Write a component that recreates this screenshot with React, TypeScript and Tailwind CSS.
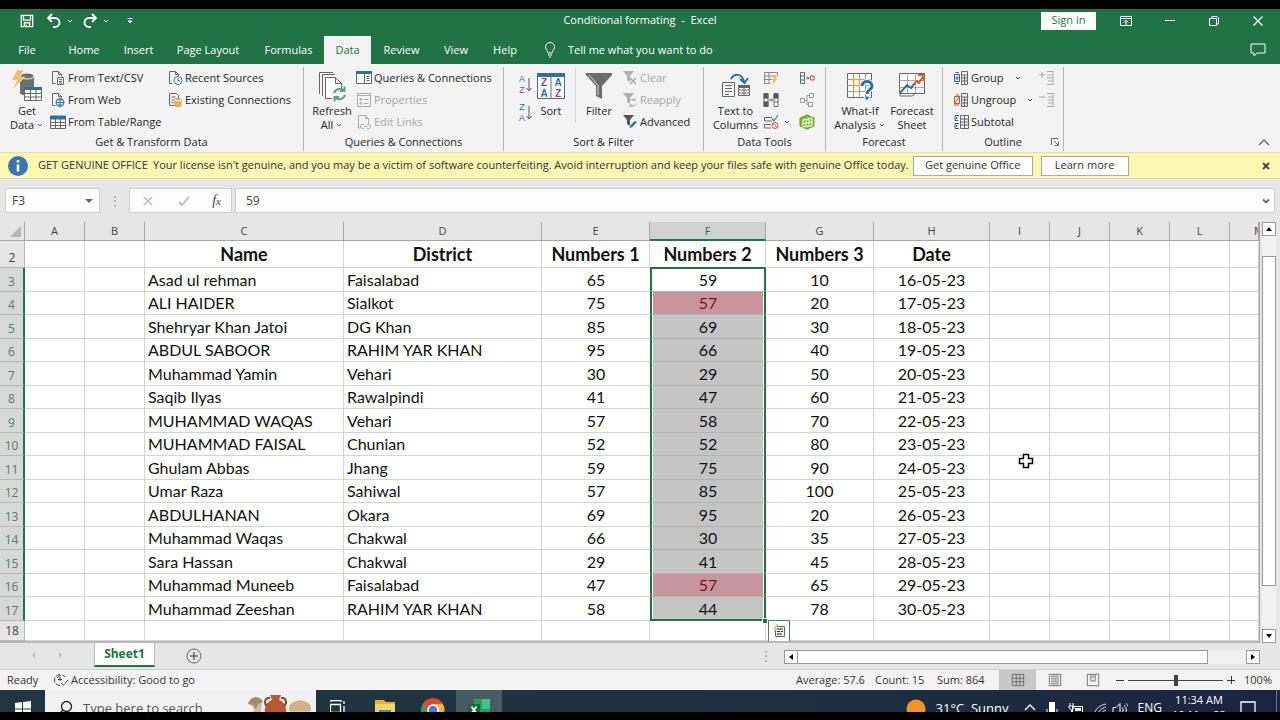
import type { ReactNode } from 'react';
import { clsx } from 'clsx';

type IconProps = { className?: string; box?: string; children: ReactNode };

function Icon({ className = 'size-4', box = '0 0 16 16', children }: IconProps) {
  return (
    <svg viewBox={box} className={clsx('shrink-0', className)} fill="none" stroke="#666" strokeWidth="1" aria-hidden="true">
      {children}
    </svg>
  );
}

const Chevron = ({ className = 'stroke-[#555]' }: { className?: string }) => (
  <svg viewBox="0 0 8 8" className={clsx('size-2 shrink-0', className)} fill="none" aria-hidden="true">
    <path d="M2 3l2 2 2-2" />
  </svg>
);

/* small ribbon icons */

const page = <path d="M2.500 1.500h6l3 3v2M8.500 1.500v3h3M2.500 1.500v12h3" fill="none" />;

const icons = {
  textCsv: (
    <Icon>
      {page}
      <path d="M7.500 7.500h6v7h-6zM9 9.500h3M9 11.500h3M9 13h3" fill="#fff" />
    </Icon>
  ),
  web: (
    <Icon>
      {page}
      <g stroke="#2f6ea5">
        <circle cx="10" cy="10.500" r="4" fill="#fff" />
        <path d="M6 10.500h8M10 6.500v8M7.500 8h5M7.500 13h5" />
      </g>
    </Icon>
  ),
  table: (
    <Icon>
      <path d="M.5 2.500h15v12H.5z" fill="#fff" />
      <path d="M.5 2h15v3H.5z" fill="#2f6ea5" stroke="#2f6ea5" />
      <path d="M.5 8.500h15M.5 11.500h15M5.500 5v9.500M10.500 5v9.500" />
    </Icon>
  ),
  recent: (
    <Icon>
      {page}
      <circle cx="11" cy="10.500" r="4" stroke="#2f6ea5" fill="#fff" />
      <path d="M11 8v3h2" stroke="#2f6ea5" />
    </Icon>
  ),
  existing: (
    <Icon>
      <path d="M2.500 1.500h7l2 2v3M2.500 1.500v12h5M4.500 5h4M4.500 8h3M4.500 10.500h2" />
      <path d="M8 7.500c0-1.300 6-1.300 6 0v6c0 1.300-6 1.300-6 0z" fill="#e6b65c" stroke="#d19c3a" />
      <path d="M8 8c1 1 5 1 6 0" stroke="#fff" />
    </Icon>
  ),
  queries: (
    <Icon>
      <path d="M.5 1.500h15v12H.5z" fill="#fff" />
      <path d="M.5 1.500h15v2H.5z" fill="#2f6ea5" stroke="#2f6ea5" />
      <path d="M8.500 4v9.500M10.500 6.500h3M10.500 8.500h3M10.500 10.500h3" />
    </Icon>
  ),
  properties: (
    <Icon>
      <g stroke="#aaa">
        <path d="M1.500 1.500h13v13h-13zM1.500 3.500h13M7.500 7.500h5M7.500 11.500h5" />
        <path d="M4 6.500h1.500V8H4zM4 10.500h1.500V12H4z" />
      </g>
    </Icon>
  ),
  links: (
    <Icon>
      <g stroke="#aaa">
        <path d="M2.500 14V1.500h7l3 3V10M9.500 1.500v3h3M2.500 14h2" />
        <path d="M8 10.500H6.500a2 2 0 000 4H8M11 10.500h1.500a2 2 0 010 4H11M7.500 12.500h4" />
      </g>
    </Icon>
  ),
  clear: (
    <Icon>
      <path d="M1 1h11L8 6v6L5 10V6z" fill="#b0b0b0" stroke="none" />
      <path d="M8 8l6 6M14 8l-6 6" stroke="#aaa" strokeWidth="1.500" />
    </Icon>
  ),
  reapply: (
    <Icon>
      <path d="M1 1h11L8 6v6L5 10V6z" fill="#b0b0b0" stroke="none" />
      <path d="M7 10a3.500 3.500 0 016-1.500V6M14 11.500a3.500 3.500 0 01-6 1.500v2.500M13 8.500h-2.500M8 13h2.500" stroke="#aaa" />
    </Icon>
  ),
  advanced: (
    <Icon>
      <path d="M1 1h11L8 6v6L5 10V6z" fill="#555" stroke="none" />
      <path d="M7 14.500l1-3 5-5 2 2-5 5z" fill="#2f6ea5" stroke="#fff" strokeWidth=".5" />
    </Icon>
  ),
  flashFill: (
    <Icon>
      <path d="M1.500 2.500h13M1.500 2.500v11h6M1.500 6h11M1.500 9.500h8M6 2.500v11M14.500 2.500v3" stroke="#888" />
      <path d="M11.500 5.500h3l-2 3.500h2L9 15l1.500-4.500H9z" fill="#e8c168" stroke="none" />
    </Icon>
  ),
  duplicates: (
    <Icon>
      <path d="M1 1.500h4v13H1zM11 1.500h4v13h-4zM1 6h4M1 10h4M11 6h4M11 10h4" fill="#fff" />
      <path d="M1 1.500h4V6H1zM1 10h4v4.500H1zM11 2h4v4h-4z" fill="#555" />
      <path d="M6 8h3.500M8 6.500L9.500 8 8 9.500" stroke="#2f6ea5" />
    </Icon>
  ),
  validation: (
    <Icon>
      <path d="M9 3.500H1.500V7H9M8 10.500H1.500V14H8" />
      <path d="M9 4.500l2 2.500 4-6" stroke="#3f9a6b" strokeWidth="1.300" />
      <circle cx="12" cy="11.500" r="3" stroke="#d2453a" />
      <path d="M10 9.500l4 4" stroke="#d2453a" />
    </Icon>
  ),
  consolidate: (
    <Icon>
      <path d="M1.500 2.500h4v11h-4zM1.500 6h4M1.500 10h4" />
      <path d="M7 8h2.500M8.500 6.500L10 8l-1.500 1.500" stroke="#2f6ea5" />
      <path d="M11.500 6h3.500v4h-3.500z" stroke="#c9502e" />
    </Icon>
  ),
  relationships: (
    <Icon>
      <path d="M1.500 6.500h4v4h-4zM10.500 1.500h4v4h-4zM9.500 10.500h4v4h-4zM5.500 8.500h2.500v-5h2.500M8 8.500v4h1.500" stroke="#999" />
    </Icon>
  ),
  model: (
    <Icon>
      <path d="M1 4l7-3 7 3v8l-7 3-7-3z" fill="#7abf2e" stroke="#5e9f1c" />
      <path d="M4 6l9-2v8l-9 1zM4 9.500l9-1.500M7 5.500V13M10 4.800v7.500" stroke="#fff" />
    </Icon>
  ),
  group: (
    <Icon>
      <path d="M8.500 1.500h6v13h-6zM8.500 5h6M8.500 8h6M8.500 11h6M11.500 5v9.500M6 2.500H2.500M6 13.500H2.500" />
      <path d="M1.500 4.500h5v7h-5zM4 6v4M2.500 8h3" stroke="#3d5d7c" />
    </Icon>
  ),
  ungroup: (
    <Icon>
      <path d="M8.500 1.500h6v13h-6zM8.500 5h6M8.500 8h6M8.500 11h6M11.500 5v9.500" />
      <path d="M1.500 4.500h5v7h-5zM2 11l5-7M3 3h3M1 13h5" stroke="#c9502e" />
    </Icon>
  ),
  subtotal: (
    <Icon>
      <path d="M7.500 1.500h8v13h-8zM7.500 5h8M7.500 8h8M7.500 11h8M11.500 1.500v13" />
      <path d="M6 1.500H2v5h3M3.500 3v2M6 9.500H2v5h4M3.500 11v2" stroke="#3d5d7c" />
    </Icon>
  ),
  showDetail: (
    <Icon>
      <path d="M0 5h6M3 2v6M8 1.500h6M8 5h5M8 8h6M9 11h5M8 14.500h6M14 1v14" stroke="#aaa" />
    </Icon>
  ),
  hideDetail: (
    <Icon>
      <path d="M0 5h6M8 1.500h6M9 5h5M9 8h5M9 11h5M8 14.500h6M14 1v14" stroke="#aaa" />
    </Icon>
  ),
};

/* large ribbon icons */

const bigIcons = {
  getData: (
    <Icon className="size-8" box="0 0 32 32">
      <path d="M9 6v17c0 3 14 3 14 0V6z" fill="#6f6f6f" stroke="none" />
      <ellipse cx="16" cy="6" rx="7" ry="3" fill="#6f6f6f" stroke="#f1f1f1" />
      <path d="M6 0h7L9 7h5L2 19l4-9H1z" fill="#edbd72" stroke="#f1f1f1" strokeWidth=".5" />
      <path d="M13.500 17.500h17v13h-17z" fill="#fff" />
      <path d="M13 17h18v3H13z" fill="#2f6ea5" stroke="none" />
      <path d="M13.500 23.500h17M13.500 27h17M19.500 20v10.500M25 20v10.500" />
    </Icon>
  ),
  refresh: (
    <Icon className="size-8" box="0 0 32 32">
      <path d="M3.500 24V2.500H17M6.500 26V4.500H19" />
      <path d="M9.500 7.500h10l6 6v15h-16z" fill="#fff" />
      <path d="M19.500 7.500v6h6" />
      <path d="M16 19h15v13H16z" fill="#f3f3f3" stroke="none" />
      <path d="M18 23a6 6 0 0110-2.500M29 25a6 6 0 01-10 2.500M28.500 16.500V21H24M18.500 31.500V27H23" stroke="#5fa37c" strokeWidth="2" />
    </Icon>
  ),
  sort: (
    <Icon className="h-[26px] w-7" box="0 0 28 26">
      <path d="M.5 1.500h27v24H.5zM14 4v21" fill="#fff" />
      <path d="M0 0h28v4H0z" fill="#2f6ea5" stroke="none" />
      <g className="font-['Liberation_Sans',sans-serif] text-[10px] font-bold" stroke="none" textAnchor="middle">
        <text x="7" y="13" fill="#7b4b94">Z</text>
        <text x="21" y="13" fill="#2f6ea5">A</text>
        <text x="7" y="24" fill="#2f6ea5">A</text>
        <text x="21" y="24" fill="#7b4b94">Z</text>
      </g>
    </Icon>
  ),
  filter: (
    <Icon className="h-7 w-7" box="0 0 28 28">
      <path d="M1 1h26v2L17 14v13l-6-3V14L1 3z" fill="#6d6d6d" stroke="none" />
      <path d="M4 3l9 10.500V23" stroke="#ddd" />
    </Icon>
  ),
  textToColumns: (
    <Icon className="h-7 w-7" box="0 0 28 28">
      <path d="M.5 10.500h12v14H.5zM3 13.500h7M3 16.500h7M3 19.500h7M3 22.500h4" fill="#fff" />
      <path d="M16.500 13.500h11v10h-11zM16.500 18h11M16.500 21h11M22 14v9" fill="#fff" />
      <path d="M16 13h12v3H16z" fill="#666" stroke="none" />
      <path d="M9 7c3-6 11-6 13 3M18 7l4.500 4L26 6" stroke="#2f6ea5" strokeWidth="2" />
    </Icon>
  ),
  whatIf: (
    <Icon className="h-7 w-7" box="0 0 28 28">
      <path d="M1.500 1.500h24v24h-24z" fill="#fff" />
      <path d="M1.500 7.500h24M1.500 13.500h24M1.500 19.500h24M7.500 1.500v24M13.500 1.500v24M19.500 1.500v24" stroke="#999" />
      <path d="M7.500 7.500h6v6h-6zM7.500 19.500h6" stroke="#e0a93c" strokeWidth="1.500" />
      <path d="M16 14c0-6 10-6 10 0 0 4-5 3.500-5 8M21 24.500v3" stroke="#fff" strokeWidth="5" />
      <path d="M16 14c0-6 10-6 10 0 0 4-5 3.500-5 8M21 24.500v3" stroke="#2f6ea5" strokeWidth="3" />
    </Icon>
  ),
  forecast: (
    <Icon className="h-7 w-7" box="0 0 28 28">
      <path d="M1.500 1.500h25v20h-25z" fill="#fff" />
      <path d="M1.500 8.500h25M1.500 15.500h25M9.500 1.500v20M17.500 1.500v20" stroke="#aaa" />
      <path d="M2 22v2h12l4-3" />
      <path d="M2 21l7-8 4 3 4-5" stroke="#2f6ea5" strokeWidth="2" />
      <path d="M14 14l5-5 2 2 5-8M20 3h6v6" stroke="#d15a35" strokeWidth="2" />
    </Icon>
  ),
};

function SortOrder({ label, top, bottom }: { label: string; top: string; bottom: string }) {
  return (
    <button type="button" aria-label={label} className="flex h-6 items-center">
      <span className="flex flex-col font-['Liberation_Sans',sans-serif] text-[9px] leading-[11px]">
        <span className="text-[#2f6ea5]">{top}</span>
        <span className="text-[#7b4b94]">{bottom}</span>
      </span>
      <Icon className="h-4 w-2" box="0 0 8 16">
        <path d="M4 1v13M1.500 11L4 14l2.500-3" stroke="#555" />
      </Icon>
    </button>
  );
}

type SmallProps = { icon: ReactNode; label: string; disabled?: boolean; menu?: boolean };

function SmallButton({ icon, label, disabled, menu }: SmallProps) {
  return (
    <button
      type="button"
      disabled={disabled}
      className="flex h-[22px] items-center gap-0.5 whitespace-nowrap disabled:text-[#a6a6a6]"
    >
      {icon}
      {label}
      {menu && <Chevron className="ml-2 stroke-[#555]" />}
    </button>
  );
}

type BigProps = { icon: ReactNode; lines: string[]; menu?: boolean; className?: string };

function BigButton({ icon, lines, menu, className }: BigProps) {
  return (
    <button type="button" className={clsx('flex shrink-0 flex-col items-center leading-[14px]', className)}>
      <span className="flex h-[37px] items-center">{icon}</span>
      {lines.map((line, index) => (
        <span key={line} className="flex items-center gap-0.5 whitespace-nowrap">
          {line}
          {menu && index === lines.length - 1 && <Chevron />}
        </span>
      ))}
    </button>
  );
}

function RibbonGroup({ title, className, children, corner }: { title: string; className: string; children: ReactNode; corner?: boolean }) {
  return (
    <section className={clsx('flex shrink-0 flex-col border-r border-[#b5b5b5]', className)}>
      <div className="flex h-[66px] items-start">{children}</div>
      <div className="flex items-center">
        <h2 className="flex-1 text-center leading-[18px]">{title}</h2>
        {corner && (
          <button type="button" aria-label="Outline settings" className="-ml-3 pr-1">
            <Icon className="size-2" box="0 0 8 8">
              <path d="M.5 7V.5H7M3 3l4 4M7.500 3.500v4h-4" />
            </Icon>
          </button>
        )}
      </div>
    </section>
  );
}

function TitleBar() {
  return (
    <header className="flex h-[27px] items-center pb-1 text-white">
      <div className="flex flex-1 items-center">
        <button type="button" aria-label="Save" className="ml-5">
          <Icon className="size-3.5">
            <path d="M1.500 1.500h13v13h-13zM4 2v5h8V2M5 14v-4h6v4M7 12v2" stroke="#fff" strokeWidth="1.500" />
          </Icon>
        </button>
        <button type="button" aria-label="Undo" className="ml-3 flex items-center gap-1">
          <Icon>
            <path d="M6 1L2 5l4 4M2 5h7a4 4 0 010 9H7" stroke="#fff" strokeWidth="1.800" />
          </Icon>
          <Chevron className="stroke-white" />
        </button>
        <button type="button" aria-label="Redo" className="ml-2 flex items-center gap-1">
          <Icon>
            <path d="M10 1l4 4-4 4M14 5H7a4 4 0 000 9h2" stroke="#fff" strokeWidth="1.800" />
          </Icon>
          <Chevron className="stroke-white" />
        </button>
        <button type="button" aria-label="Customize Quick Access Toolbar" className="ml-4">
          <Icon className="size-2" box="0 0 8 8">
            <path d="M1.500 1.500h5M2 4l2 2 2-2z" stroke="#fff" fill="#fff" />
          </Icon>
        </button>
      </div>
      <h1>Conditional formating&nbsp; -&nbsp; Excel</h1>
      <div className="flex flex-1 items-center justify-end">
        <button type="button" className="h-[18px] w-[55px] bg-white text-[#217346]">
          Sign in
        </button>
        <button type="button" aria-label="Ribbon display options" className="ml-6">
          <Icon className="h-3 w-3" box="0 0 12 12">
            <path d="M.5 1.500h11v9H.5zM.5 3.500h11M6 10V5.500M4 7.500l2-2 2 2" stroke="#fff" />
          </Icon>
        </button>
        <button type="button" aria-label="Minimize" className="ml-8">
          <Icon className="size-3" box="0 0 12 12">
            <path d="M1 5.500h10" stroke="#fff" />
          </Icon>
        </button>
        <button type="button" aria-label="Restore" className="ml-8">
          <Icon className="size-3" box="0 0 12 12">
            <path d="M1.500 3.500h7v7h-7zM4 3V1.500h5l1.500 1.500v6H9" stroke="#fff" />
          </Icon>
        </button>
        <button type="button" aria-label="Close" className="mr-4 ml-8">
          <Icon className="size-3" box="0 0 12 12">
            <path d="M1.500 1.500l9 9M10.500 1.500l-9 9" stroke="#fff" strokeWidth="1.300" />
          </Icon>
        </button>
      </div>
    </header>
  );
}

const tabs = [
  { name: 'File', width: 'w-[54px]' },
  { name: 'Home', width: 'w-[60px]' },
  { name: 'Insert', width: 'w-[49px]' },
  { name: 'Page Layout', width: 'w-[90px]' },
  { name: 'Formulas', width: 'w-[71px]' },
  { name: 'Data', width: 'w-[47px]' },
  { name: 'Review', width: 'w-[61px]' },
  { name: 'View', width: 'w-[48px]' },
  { name: 'Help', width: 'w-[50px]' },
];

function RibbonTabs() {
  return (
    <nav className="flex h-7 items-center text-white" aria-label="Ribbon">
      {tabs.map((tab) => (
        <button
          key={tab.name}
          type="button"
          className={clsx('h-full whitespace-nowrap', tab.width, tab.name === 'Data' && 'bg-[#f3f3f3] text-[#217346]')}
        >
          {tab.name}
        </button>
      ))}
      <button type="button" className="ml-3.5 flex items-center gap-3 whitespace-nowrap">
        <Icon className="h-4 w-3" box="0 0 12 16">
          <path d="M4 11C4 9 1.500 8 1.500 5a4.500 4.500 0 019 0C10.500 8 8 9 8 11zM4 13h4M5 15h2" stroke="#fff" />
        </Icon>
        Tell me what you want to do
      </button>
      <button type="button" aria-label="Comments" className="mr-3.5 ml-auto">
        <Icon>
          <path d="M1 2h14v9H7l-3 3v-3H1z" stroke="#fff" />
        </Icon>
      </button>
    </nav>
  );
}

function Ribbon() {
  return (
    <div className="flex bg-[#f3f3f3] pt-[3px] pb-px text-[#262626]">
      <RibbonGroup title="Get & Transform Data" className="w-[304px]">
        <BigButton icon={bigIcons.getData} lines={['Get', 'Data']} menu className="w-[50px] pl-1" />
        <div className="w-[117px]">
          <SmallButton icon={icons.textCsv} label="From Text/CSV" />
          <SmallButton icon={icons.web} label="From Web" />
          <SmallButton icon={icons.table} label="From Table/Range" />
        </div>
        <div>
          <SmallButton icon={icons.recent} label="Recent Sources" />
          <SmallButton icon={icons.existing} label="Existing Connections" />
        </div>
      </RibbonGroup>

      <RibbonGroup title="Queries & Connections" className="w-[200px]">
        <BigButton icon={bigIcons.refresh} lines={['Refresh', 'All']} menu className="w-[52px] pl-1" />
        <div>
          <SmallButton icon={icons.queries} label="Queries & Connections" />
          <SmallButton icon={icons.properties} label="Properties" disabled />
          <SmallButton icon={icons.links} label="Edit Links" disabled />
        </div>
      </RibbonGroup>

      <RibbonGroup title="Sort & Filter" className="w-[200px]">
        <div className="flex w-[29px] flex-col items-end gap-1 pt-1.5">
          <SortOrder label="Sort A to Z" top="A" bottom="Z" />
          <SortOrder label="Sort Z to A" top="Z" bottom="A" />
        </div>
        <BigButton icon={bigIcons.sort} lines={['Sort']} className="w-9" />
        <div className="ml-1.5 h-14 border-l border-[#d5d5d5]" />
        <BigButton icon={bigIcons.filter} lines={['Filter']} className="w-[46px]" />
        <div>
          <SmallButton icon={icons.clear} label="Clear" disabled />
          <SmallButton icon={icons.reapply} label="Reapply" disabled />
          <SmallButton icon={icons.advanced} label="Advanced" />
        </div>
      </RibbonGroup>

      <RibbonGroup title="Data Tools" className="w-[122px]">
        <BigButton icon={bigIcons.textToColumns} lines={['Text to', 'Columns']} className="w-[59px] pl-1" />
        <div className="grid grid-cols-[20px_16px_16px] items-center">
          <button type="button" aria-label="Flash Fill" className="flex h-[22px] items-center">{icons.flashFill}</button>
          <span />
          <button type="button" aria-label="Consolidate">{icons.consolidate}</button>
          <button type="button" aria-label="Remove Duplicates" className="flex h-[22px] items-center">{icons.duplicates}</button>
          <span />
          <button type="button" aria-label="Relationships">{icons.relationships}</button>
          <button type="button" aria-label="Data Validation" className="flex h-[22px] items-center">{icons.validation}</button>
          <Chevron />
          <button type="button" aria-label="Manage Data Model">{icons.model}</button>
        </div>
      </RibbonGroup>

      <RibbonGroup title="Forecast" className="w-[117px]">
        <BigButton icon={bigIcons.whatIf} lines={['What-If', 'Analysis']} menu className="ml-1 w-[60px]" />
        <BigButton icon={bigIcons.forecast} lines={['Forecast', 'Sheet']} className="w-11" />
      </RibbonGroup>

      <RibbonGroup title="Outline" className="w-[121px]" corner>
        <div className="w-[88px] pl-2.5">
          <SmallButton icon={icons.group} label="Group" menu />
          <SmallButton icon={icons.ungroup} label="Ungroup" menu />
          <SmallButton icon={icons.subtotal} label="Subtotal" />
        </div>
        <div className="pl-2">
          <button type="button" aria-label="Show Detail" disabled className="flex h-[22px] items-center">{icons.showDetail}</button>
          <button type="button" aria-label="Hide Detail" disabled className="flex h-[22px] items-center">{icons.hideDetail}</button>
        </div>
      </RibbonGroup>
      <button type="button" aria-label="Collapse the Ribbon" className="mt-auto mr-2 ml-auto">
        <Icon>
          <path d="M3 10l5-5 5 5" strokeWidth="1.300" />
        </Icon>
      </button>
    </div>
  );
}

function LicenseBar() {
  return (
    <div role="alert" className="flex h-[27px] items-center border-y border-[#e0dfae] bg-[#f9f7b2] pl-2 text-[#333]">
      <Icon className="size-5" box="0 0 20 20">
        <circle cx="10" cy="10" r="10" fill="#3b74b0" stroke="none" />
        <path d="M10 8.500v7M10 4v2.500" stroke="#fff" strokeWidth="2.500" />
      </Icon>
      <strong className="ml-2.5 w-[115px] font-normal whitespace-nowrap">GET GENUINE OFFICE</strong>
      <p className="mr-1 whitespace-nowrap">
        Your license isn't genuine, and you may be a victim of software counterfeiting. Avoid interruption and keep your files safe with
        genuine Office today.
      </p>
      <button type="button" className="h-5 w-[120px] border border-[#ababab] bg-[#fdfdfd]">Get genuine Office</button>
      <button type="button" className="ml-2 h-5 w-[88px] border border-[#ababab] bg-[#fdfdfd]">Learn more</button>
      <button type="button" aria-label="Dismiss" className="mr-2.5 ml-auto">
        <Icon className="size-2" box="0 0 8 8">
          <path d="M1 1l6 6M7 1L1 7" stroke="#444" strokeWidth="1.800" />
        </Icon>
      </button>
    </div>
  );
}

function FormulaBar() {
  return (
    <div className="flex items-center px-[5px] py-[9px] text-[12px] text-[#444]">
      <div className="flex h-[25px] w-[95px] items-center border border-[#cfcfcf] bg-[#fcfcfc]">
        <input aria-label="Name box" defaultValue="F3" className="min-w-0 flex-1 pl-1.5 outline-none" />
        <Icon className="mr-1.5 h-1.5 w-2" box="0 0 8 6">
          <path d="M0 1h8L4 5z" fill="#666" stroke="none" />
        </Icon>
      </div>
      <span className="w-[29px] text-center text-[#999]">⋮</span>
      <div className="flex h-[25px] w-[103px] items-center justify-between border border-[#cfcfcf] bg-[#fcfcfc] px-2.5">
        <button type="button" aria-label="Cancel">
          <Icon>
            <path d="M4 4l8 8M12 4l-8 8" stroke="#bbb" strokeWidth="1.500" />
          </Icon>
        </button>
        <button type="button" aria-label="Enter">
          <Icon>
            <path d="M3 9l3 3 7-8" stroke="#bbb" strokeWidth="1.800" />
          </Icon>
        </button>
        <button type="button" aria-label="Insert function" className="font-['Liberation_Serif',serif] text-[14px] italic">
          f<span className="text-[11px]">x</span>
        </button>
      </div>
      <div className="ml-[3px] flex h-[25px] flex-1 items-center border border-[#cfcfcf] bg-[#fcfcfc]">
        <input aria-label="Formula bar" defaultValue="59" className="min-w-0 flex-1 pl-2.5 outline-none" />
        <Icon className="mr-1 size-2" box="0 0 8 8">
          <path d="M1 2.500l3 3 3-3" strokeWidth="1.800" />
        </Icon>
      </div>
    </div>
  );
}

const columns = [
  { letter: 'A', width: 'w-[60px]' },
  { letter: 'B', width: 'w-[60px]' },
  { letter: 'C', width: 'w-[199px]' },
  { letter: 'D', width: 'w-[198px]' },
  { letter: 'E', width: 'w-[108px]' },
  { letter: 'F', width: 'w-[116px]' },
  { letter: 'G', width: 'w-[108px]' },
  { letter: 'H', width: 'w-[116px]' },
  { letter: 'I', width: 'w-[60px]' },
  { letter: 'J', width: 'w-[60px]' },
  { letter: 'K', width: 'w-[60px]' },
  { letter: 'L', width: 'w-[60px]' },
  { letter: 'M', width: 'w-auto' },
];

const titles = ['', '', 'Name', 'District', 'Numbers 1', 'Numbers 2', 'Numbers 3', 'Date', '', '', '', '', ''];

const people: [string, string, number, number, number, string][] = [
  ['Asad ul rehman', 'Faisalabad', 65, 59, 10, '16-05-23'],
  ['ALI HAIDER', 'Sialkot', 75, 57, 20, '17-05-23'],
  ['Shehryar Khan Jatoi', 'DG Khan', 85, 69, 30, '18-05-23'],
  ['ABDUL SABOOR', 'RAHIM YAR KHAN', 95, 66, 40, '19-05-23'],
  ['Muhammad Yamin', 'Vehari', 30, 29, 50, '20-05-23'],
  ['Saqib Ilyas', 'Rawalpindi', 41, 47, 60, '21-05-23'],
  ['MUHAMMAD WAQAS', 'Vehari', 57, 58, 70, '22-05-23'],
  ['MUHAMMAD FAISAL', 'Chunian', 52, 52, 80, '23-05-23'],
  ['Ghulam Abbas', 'Jhang', 59, 75, 90, '24-05-23'],
  ['Umar Raza', 'Sahiwal', 57, 85, 100, '25-05-23'],
  ['ABDULHANAN', 'Okara', 69, 95, 20, '26-05-23'],
  ['Muhammad Waqas', 'Chakwal', 66, 30, 35, '27-05-23'],
  ['Sara Hassan', 'Chakwal', 29, 41, 45, '28-05-23'],
  ['Muhammad Muneeb', 'Faisalabad', 47, 57, 65, '29-05-23'],
  ['Muhammad Zeeshan', 'RAHIM YAR KHAN', 58, 44, 78, '30-05-23'],
];

const cell = 'border-r border-b p-0 whitespace-nowrap';
const gridLine = 'border-[#d4d4d4]';
const rowHead = 'border-r border-b border-[#b8b8b8] p-0 text-center align-bottom text-[12px] leading-[19px] font-normal';

function PersonRow({ person, index }: { person: (typeof people)[number]; index: number }) {
  const [name, district, first, second, third, date] = person;
  const last = index === people.length - 1;

  return (
    <tr className={index % 2 ? 'h-[23px]' : 'h-6'}>
      <th scope="row" className={clsx(rowHead, "border-r-2 border-r-[#217346] bg-[#d6d9d7] font-['Open_Sans',sans-serif] text-[#5c7a69]")}>
        {index + 3}
      </th>
      <td className={clsx(cell, gridLine)} />
      <td className={clsx(cell, gridLine)} />
      <td className={clsx(cell, gridLine, 'pl-[3px]')}>{name}</td>
      <td className={clsx(cell, gridLine, 'pl-[3px]')}>{district}</td>
      <td className={clsx(cell, gridLine, 'border-r-0 text-center')}>{first}</td>
      <td
        className={clsx(
          'relative border-x-2 border-b border-x-[#217346] p-0 text-center',
          last ? 'border-b-[#217346]' : 'border-b-[#b3b3b3]',
          last && 'shadow-[inset_0_-1px_#217346,inset_1px_0_#fff,inset_-1px_0_#fff]',
          index === 0 && 'bg-white shadow-[inset_0_1px_#217346]',
          index > 0 && !last && 'shadow-[inset_1px_0_#fff,inset_-1px_0_#fff]',
          index > 0 && second === 57 && 'bg-[#c9959d] text-[#7d0f24]',
          index > 0 && second !== 57 && 'bg-[#c5c5c5]',
        )}
      >
        {second}
        {last && (
          <>
            <span className="absolute -right-1 -bottom-1 size-1.5 border border-white bg-[#217346]" />
            <button
              type="button"
              aria-label="Quick Analysis"
              className="absolute top-full left-full z-10 ml-1 flex size-[22px] items-center justify-center border border-[#5c7a69] bg-white"
            >
              <Icon>
                <path d="M4.500 3.500h9v10h-9z" fill="#eee" />
                <path d="M6 6h6M6 8.500h3M10 8.500h2M6 11h5" stroke="#333" />
                <path d="M6 1L2 6h2l-2 4 5-5H5l3-4z" fill="#f0b9a8" stroke="none" />
              </Icon>
            </button>
          </>
        )}
      </td>
      <td className={clsx(cell, gridLine, 'text-center')}>{third}</td>
      <td className={clsx(cell, gridLine, 'text-center')}>{date}</td>
      {['I', 'J', 'K', 'L', 'M'].map((letter) => (
        <td key={letter} className={clsx(cell, gridLine)} />
      ))}
    </tr>
  );
}

function Sheet() {
  return (
    <div className="relative flex">
      <div className="min-w-0 flex-1 overflow-hidden border-b-2 border-[#b8b8b8]">
        <table className="w-full table-fixed border-separate border-spacing-0 bg-white font-['Lato',sans-serif] text-[16px] leading-[22px] text-[#111]">
          <thead className="font-['Open_Sans',sans-serif] text-[11px] leading-4 text-[#444]">
            <tr className="h-[19px] bg-[#e6e6e6]">
              <th className="w-[25px] border-r border-b border-[#a6a6a6] p-0 align-bottom">
                <Icon className="ml-2 size-4">
                  <path d="M13 2v11H2z" fill="#b5b5b5" stroke="none" />
                </Icon>
              </th>
              {columns.map((column) => (
                <th
                  key={column.letter}
                  scope="col"
                  className={clsx(
                    'overflow-hidden border-r border-b border-r-[#a6a6a6] p-0 font-normal',
                    column.width,
                    column.letter === 'F' ? 'border-b-2 border-b-[#217346] bg-[#d2d2d2] text-[#217346]' : 'border-b-[#a6a6a6]',
                    column.letter === 'M' && 'pl-6',
                  )}
                >
                  {column.letter}
                </th>
              ))}
            </tr>
          </thead>
          <tbody>
            <tr className="h-[27px]">
              <th scope="row" className={clsx(rowHead, "bg-[#e6e6e6] font-['Open_Sans',sans-serif] text-[#444]")}>
                2
              </th>
              {titles.map((title, index) => (
                <td
                  key={columns[index].letter}
                  className={clsx(
                    cell,
                    'border-r-[#d4d4d4] text-center text-[18px] font-bold',
                    title === 'Numbers 2' ? 'border-b-[#217346]' : 'border-b-[#d4d4d4]',
                  )}
                >
                  {title}
                </td>
              ))}
            </tr>
            {people.map((person, index) => (
              <PersonRow key={person[5]} person={person} index={index} />
            ))}
            <tr className="h-[19px]">
              <th scope="row" className={clsx(rowHead, "bg-[#e6e6e6] font-['Open_Sans',sans-serif] leading-[18px] text-[#444]")}>
                18
              </th>
              {columns.map((column) => (
                <td key={column.letter} className={clsx(cell, gridLine)} />
              ))}
            </tr>
          </tbody>
        </table>
      </div>
      <div className="flex w-[21px] flex-col border-l border-[#a6a6a6] pr-1 pl-0.5">
        <button type="button" aria-label="Scroll up" className="flex h-[14px] items-center justify-center border border-[#999] bg-white">
          <Icon className="size-2" box="0 0 8 8">
            <path d="M1 6h6L4 2z" fill="#000" stroke="none" />
          </Icon>
        </button>
        <div className="flex-1 bg-[#f1f1f1] pt-5">
          <div className="h-[330px] border border-[#999] bg-white" />
        </div>
        <button type="button" aria-label="Scroll down" className="flex h-[14px] items-center justify-center border border-[#999] bg-white">
          <Icon className="size-2" box="0 0 8 8">
            <path d="M1 2h6L4 6z" fill="#000" stroke="none" />
          </Icon>
        </button>
      </div>
      <Icon className="absolute top-[231px] left-[1018px] size-4">
        <path d="M5.500 1.500h5v4h4v5h-4v4h-5v-4h-4v-5h4z" fill="#fff" stroke="#000" strokeWidth="1.500" />
      </Icon>
    </div>
  );
}

function SheetTabs() {
  return (
    <div className="flex h-[26px] items-start">
      <div className="flex w-[94px] justify-center gap-5 pt-2">
        <Icon className="size-2" box="0 0 8 8">
          <path d="M6 1v6L3 4z" fill="#bbb" stroke="none" />
        </Icon>
        <Icon className="size-2" box="0 0 8 8">
          <path d="M2 1v6l3-3z" fill="#bbb" stroke="none" />
        </Icon>
      </div>
      <button type="button" className="h-6 w-[61px] border-x border-b-2 border-x-[#b8b8b8] border-b-[#217346] bg-white text-[12px] font-bold text-[#217346]">
        Sheet1
      </button>
      <button type="button" aria-label="New sheet" className="mt-[5px] ml-[31px]">
        <Icon>
          <circle cx="8" cy="8" r="7" />
          <path d="M8 4v8M4 8h8" strokeWidth="1.500" />
        </Icon>
      </button>
      <span className="ml-auto pt-1 text-[12px] text-[#999]">⋮</span>
      <div className="mt-[7px] mr-5 ml-3 flex h-[14px] w-[476px]">
        <button type="button" aria-label="Scroll left" className="flex w-[14px] items-center justify-center border border-[#999] bg-white">
          <Icon className="size-2" box="0 0 8 8">
            <path d="M6 1v6L2 4z" fill="#000" stroke="none" />
          </Icon>
        </button>
        <div className="w-[410px] border border-l-0 border-[#999] bg-white" />
        <div className="flex-1 bg-[#f1f1f1]" />
        <button type="button" aria-label="Scroll right" className="flex w-[14px] items-center justify-center border border-[#999] bg-white">
          <Icon className="size-2" box="0 0 8 8">
            <path d="M2 1v6l4-3z" fill="#000" stroke="none" />
          </Icon>
        </button>
      </div>
    </div>
  );
}

function StatusBar() {
  return (
    <footer className="flex h-[21px] items-center border-t border-[#cfcfcf] bg-[#f3f3f3] pl-[7px] text-[#333]">
      <span className="w-[46px]">Ready</span>
      <Icon>
        <path d="M7 2.500a5.500 5.500 0 100 11M4 6l3-3v6M5 7.500h4M10 3l2 2M8 11l2.500 2.500L15 8" stroke="#444" strokeDasharray="5 1" />
      </Icon>
      <span className="ml-0.5">Accessibility: Good to go</span>
      <span className="ml-auto w-[79px]">Average: 57.6</span>
      <span className="w-[62px]">Count: 15</span>
      <span className="w-[62px]">Sum: 864</span>
      <button type="button" aria-label="Normal view" className="flex h-full w-[37px] items-center justify-center bg-[#c8c8c8]">
        <Icon className="size-3.5">
          <path d="M1.500 1.500h13v13h-13zM1.500 6h13M1.500 10h13M6 1.500v13M10 1.500v13" />
        </Icon>
      </button>
      <button type="button" aria-label="Page layout view" className="flex w-[38px] justify-center">
        <Icon className="size-3.5">
          <path d="M1.500 1.500h13v13h-13zM4.500 3.500h7v9h-7zM6 6h4M6 8h4M6 10h4" />
        </Icon>
      </button>
      <button type="button" aria-label="Page break preview" className="flex w-[38px] justify-center">
        <Icon className="size-3.5">
          <path d="M1.500 1.500h13v13h-13zM5.500 2v7h5V2M8 2v4" />
        </Icon>
      </button>
      <div className="flex items-center gap-1 pl-1">
        <button type="button" aria-label="Zoom out">
          <Icon className="size-2" box="0 0 8 8">
            <path d="M0 4.500h8" stroke="#333" />
          </Icon>
        </button>
        <input
          type="range"
          aria-label="Zoom"
          defaultValue={50}
          className="h-3 w-[95px] appearance-none bg-[linear-gradient(#444,#444)] bg-[length:100%_1px] bg-center bg-no-repeat [&::-webkit-slider-thumb]:h-[11px] [&::-webkit-slider-thumb]:w-1 [&::-webkit-slider-thumb]:appearance-none [&::-webkit-slider-thumb]:bg-[#444]"
        />
        <button type="button" aria-label="Zoom in">
          <Icon className="size-2" box="0 0 8 8">
            <path d="M0 4.500h8M4.500 0v8" stroke="#333" />
          </Icon>
        </button>
      </div>
      <span className="w-[45px] pr-2 text-right">100%</span>
    </footer>
  );
}

function Taskbar() {
  return (
    <div className="h-[22px] overflow-hidden">
      <div className="flex h-10 items-center bg-linear-to-r from-[#1f3641] via-[#1d3440] to-[#1b2340] text-white">
        <button type="button" aria-label="Start" className="flex h-full w-[45px] justify-center pt-[11px]">
          <Icon>
            <path d="M0 2l7-1v6.500H0zM8 1l8-1v7.500H8zM0 8.500h7V15l-7-1zM8 8.500h8V16l-8-1z" fill="#fff" stroke="none" />
          </Icon>
        </button>
        <label className="flex h-full w-[271px] items-start bg-[#f1f1f1] text-[#444]">
          <Icon className="mt-2.5 ml-3 size-4">
            <circle cx="9.500" cy="6.500" r="5" stroke="#222" strokeWidth="1.300" />
            <path d="M6 10l-5 5" stroke="#222" strokeWidth="1.300" />
          </Icon>
          <input placeholder="Type here to search" className="mt-2 ml-2.5 w-40 text-[13px] leading-5 outline-none placeholder:text-[#555]" />
          <svg viewBox="0 0 64 36" className="mt-1 ml-1 h-9 w-16 shrink-0" aria-hidden="true">
            <path d="M2 10c0-8 12-9 13-1l-1 8 3 5v14H4V21l3-5-2-4z" fill="#cbbfae" />
            <path d="M1 10c2-8 12-9 15-2l-5 2-2 5-3-4z" fill="#9c8d7b" />
            <path d="M23 1h11l-2 5c11 4 8 20 0 29h-8c-7-9-10-25 1-29z" fill="#bb5638" />
            <path d="M23 4c-6-1-6 6-3 8M34 4c6-1 6 6 3 8" fill="none" stroke="#9d432a" strokeWidth="2" />
            <path d="M42 14c0-5 6-7 11-8 5 1 11 3 11 8v3H42z" fill="#d3b38b" />
            <path d="M44 17h18v19H44z" fill="#e0c6a0" />
            <path d="M46 18v18M50 18v18M54 18v18M58 18v18" stroke="#ac8861" />
          </svg>
        </label>
        <button type="button" aria-label="Task view" className="flex h-full w-11 justify-center pt-2.5">
          <Icon>
            <path d="M1 2V.5h10V2M.5 4.500h10v8H.500zM1 15v-1.500h10V15M14 1v3M14 6v9" stroke="#fff" strokeWidth="1.300" />
          </Icon>
        </button>
        <button type="button" aria-label="File Explorer" className="flex h-full w-[50px] justify-center pt-2">
          <Icon className="size-6" box="0 0 24 24">
            <path d="M2 2h9l2 2h9v18H2z" fill="#e4ae38" stroke="none" />
            <path d="M2 6h20v16H2z" fill="#f8d365" stroke="none" />
            <path d="M6 12h12v10H6z" fill="#3e8bd0" stroke="none" />
          </Icon>
        </button>
        <button type="button" aria-label="Chrome" className="flex h-full w-[46px] justify-center pt-2">
          <Icon className="size-6" box="0 0 24 24">
            <circle cx="12" cy="12" r="11.500" fill="#ecb92f" stroke="none" />
            <path d="M2 6a11.500 11.500 0 0120 0H12l-5 9z" fill="#d94a38" stroke="none" />
            <path d="M2 6l6 10 4 7.500A11.500 11.500 0 012 6z" fill="#349b55" stroke="none" />
            <circle cx="12" cy="12" r="5" fill="#3f7fe0" stroke="#fff" strokeWidth="1.500" />
          </Icon>
        </button>
        <button type="button" aria-label="Excel" className="flex h-full w-[46px] justify-center bg-[#485b63] pt-2">
          <Icon className="size-6" box="0 0 24 24">
            <path d="M7 1h16v21H7z" fill="#269b62" stroke="none" />
            <path d="M15 1h8v10h-8z" fill="#3cc585" stroke="none" />
            <path d="M1 6h12v12H1z" fill="#14693e" stroke="none" />
            <path d="M4.500 8.500l5 7M9.500 8.500l-5 7" stroke="#fff" strokeWidth="1.800" />
          </Icon>
        </button>
        <div className="ml-auto flex h-full items-start pt-2 pr-[3px]">
          <Icon className="size-5" box="0 0 20 20">
            <circle cx="10" cy="11" r="9.500" fill="#ee9428" stroke="none" />
          </Icon>
          <span className="ml-2.5 w-[88px] text-[13px] leading-5 whitespace-nowrap">31°C&nbsp; Sunny</span>
          <Icon className="mt-1 size-3" box="0 0 12 12">
            <path d="M1 8l5-5 5 5" stroke="#fff" strokeWidth="1.300" />
          </Icon>
          <Icon className="mt-1 ml-2 size-4">
            <path d="M5 0h6v10H5z" fill="#fff" stroke="none" />
            <path d="M3 7v5h10V7M8 12v3" stroke="#fff" />
          </Icon>
          <Icon className="mt-1 ml-2 size-4">
            <path d="M4.500 4.500h10v6h-10z" stroke="#fff" />
            <path d="M7 6h6v3H7z" fill="#fff" stroke="none" />
            <path d="M2 1v3M5 1v3M1 4h5v2L3.500 8 1 6zM3.500 8v5" stroke="#fff" />
          </Icon>
          <Icon className="mt-1 ml-2 size-4">
            <path d="M2 13C3 7 8 3 14 2M5 14c1-5 5-8 9-9M8 14c1-3 3-5 6-6M11 14c1-1 2-3 3-3" stroke="#ddd" />
          </Icon>
          <Icon className="mt-1 ml-1 size-4">
            <path d="M1 5.500h3l4-4v13l-4-4H1zM10 5.500c1.500 1 1.500 4 0 5M12 3.500c3 2 3 7 0 9M14 1.500c4 3 4 10 0 13" stroke="#fff" />
          </Icon>
          <span className="ml-2.5 text-[12px] leading-5">ENG</span>
          <span className="-mt-1.5 ml-2 w-[58px] text-center text-[11px] leading-[15px] whitespace-nowrap">
            11:34 AM
            <br />
            19-May-23
          </span>
          <Icon className="mt-0.5 ml-3 size-4">
            <path d="M1 2h14v11H9l-3 3v-3H1z" stroke="#fff" strokeWidth="1.300" />
          </Icon>
          <span className="-mt-2 ml-5 h-10 border-l border-[#6b7488]" />
        </div>
      </div>
    </div>
  );
}

export default function App() {
  return (
    <div className="flex min-h-screen flex-col bg-black pt-[9px] font-['Open_Sans',sans-serif] text-[11px]">
      <div className="bg-[#217346]">
        <TitleBar />
        <RibbonTabs />
      </div>
      <Ribbon />
      <LicenseBar />
      <main className="bg-[#e6e6e6]">
        <FormulaBar />
        <Sheet />
        <SheetTabs />
      </main>
      <StatusBar />
      <Taskbar />
    </div>
  );
}
